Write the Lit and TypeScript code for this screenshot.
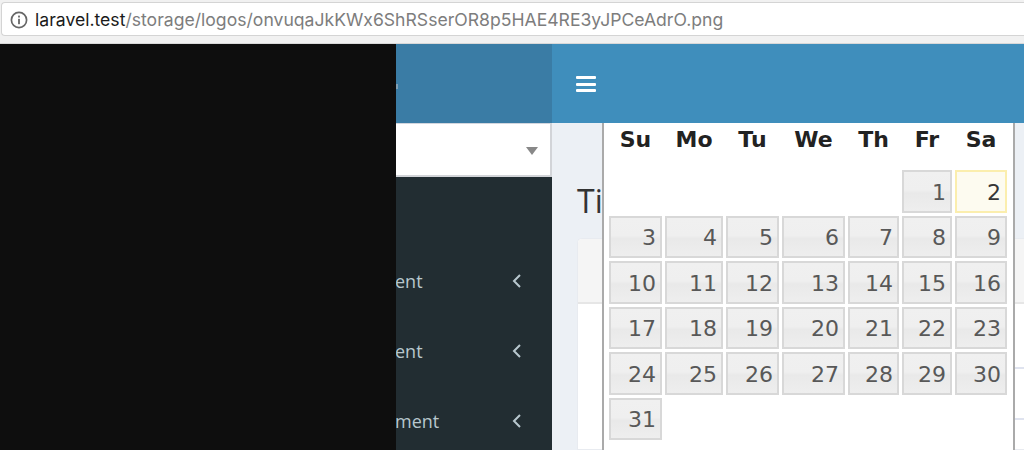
import { LitElement, html, css, svg } from "lit";
import { customElement } from "lit/decorators.js";

const HEAD = ["Su", "Mo", "Tu", "We", "Th", "Fr", "Sa"];
const WEEKS: (number | null)[][] = [
  [null, null, null, null, null, 1, 2],
  [3, 4, 5, 6, 7, 8, 9],
  [10, 11, 12, 13, 14, 15, 16],
  [17, 18, 19, 20, 21, 22, 23],
  [24, 25, 26, 27, 28, 29, 30],
  [31, null, null, null, null, null, null],
];
const MENU = ["ent", "ent", "ment"];

@customElement("app-root")
export class AppRoot extends LitElement {
  static styles = css`
    :host { display: block; width: 1024px; height: 450px; overflow: hidden; position: relative; background: #ecf0f5; font-family: "Open Sans", "Noto Sans", sans-serif; }
    .chrome { height: 44px; box-sizing: border-box; background: #f1f1f1; border-bottom: 1px solid #d8d8d8; padding: 2px 0 7px 1px; }
    .url { height: 34px; box-sizing: border-box; background: #fff; border: 1px solid #d4d4d4; border-right: 0; border-radius: 4px 0 0 4px; display: flex; align-items: center; padding: 1px 0 0 8px; gap: 7px; font: 17.6px "Inter", "Liberation Sans", sans-serif; color: #7d7d7d; white-space: nowrap; }
    .url b { font-weight: 400; color: #1a1a1a; }
    .url svg { flex: none; }
    .page { display: flex; height: 406px; }
    .black { width: 396px; flex: none; background: #0e0e0e; }
    .side { width: 156px; flex: none; display: flex; flex-direction: column; background: #222d32; overflow: hidden; }
    .side-top { height: 79px; flex: none; box-sizing: border-box; background: #3a7ca5; padding-top: 40px; }
    .side-top i { display: block; width: 2px; height: 5px; background: #7f9fb5; }
    .select { height: 54px; flex: none; box-sizing: border-box; background: #fff; border-bottom: 2px solid #d2d4d8; border-top: 1px solid #d2d6de; border-right: 2px solid #d2d4d8; display: flex; align-items: center; justify-content: flex-end; padding: 2px 12px 0 0; }
    .caret { width: 0; height: 0; border-left: 6px solid transparent; border-right: 6px solid transparent; border-top: 8px solid #888; }
    .menu { flex: 1; padding-top: 94px; display: flex; flex-direction: column; gap: 50px; color: #b8c7ce; font-size: 18px; line-height: 20px; }
    .menu-item { display: flex; justify-content: space-between; align-items: center; padding-right: 30px; margin-left: -1px; }
    .menu-item svg { flex: none; }
    .main { flex: 1; min-width: 0; display: flex; flex-direction: column; }
    .nav { height: 79px; flex: none; box-sizing: border-box; background: #3f8ebc; padding: 32px 0 0 24px; }
    .burger { width: 20px; height: 16px; display: flex; flex-direction: column; justify-content: space-between; }
    .burger i { display: block; height: 3px; background: #fff; border-radius: 1px; }
    .content { flex: 1; padding: 0 0 0 25px; display: flex; flex-direction: column; }
    h1 { margin: 0; padding-top: 58px; font-size: 32px; font-weight: 400; line-height: 40px; color: #333; height: 57px; box-sizing: content-box; }
    .card { flex: 1; background: #fff; border: 1px solid #e8ebf0; border-right: 0; border-radius: 5px 0 0 0; overflow: hidden; }
    .card-head { height: 63px; background: #f5f5f5; border-bottom: 2px solid #e6e6e6; }
    .line { height: 63px; margin-left: 60px; border-bottom: 2px solid #dfe3ef; }
    .line.short { height: 49px; }
    .cal { position: absolute; left: 602px; top: 123px; width: 413px; height: 340px; box-sizing: border-box; background: #fff; border: 2px solid #aaa; border-top: 0; padding: 0 2px; font-family: "DejaVu Sans", Verdana, sans-serif; }
    table { border-collapse: separate; border-spacing: 3px; width: 404px; table-layout: fixed; margin-top: -1px; }
    col.c1 { width: 53px; } col.c2 { width: 58px; } col.c3 { width: 53px; } col.c4 { width: 63px; } col.c5 { width: 51px; } col.c6 { width: 50px; } col.c7 { width: 52px; }
    th { height: 27px; padding: 1px 0 14px; font-size: 22px; font-weight: 700; color: #222; text-align: center; line-height: 27px; }
    td { height: 42.5px; box-sizing: border-box; padding: 2px 4px 0 0; text-align: right; font-size: 22px; color: #585858; }
    .day { border: 2px solid #d8d8d8; background: linear-gradient(#f0f0f0 0%, #efefef 46%, #e9e9e9 54%, #eeeeee 100%); }
    .today { border: 2px solid #fbeeae; background: #fdfbf0; color: #363636; }
    .empty { background: none; }
  `;

  private icon() {
    return html`<svg width="18" height="18" viewBox="0 0 18 18" fill="none">
      ${svg`<circle cx="9" cy="9" r="7.6" stroke="#666" stroke-width="1.7"/><rect x="8.1" y="7.8" width="1.8" height="5.4" fill="#666"/><rect x="8.1" y="4.6" width="1.8" height="1.9" fill="#666"/>`}
    </svg>`;
  }

  render() {
    return html`
      <div class="chrome">
        <div class="url">${this.icon()}<span><b>laravel.test</b>/storage/logos/onvuqaJkKWx6ShRSserOR8p5HAE4RE3yJPCeAdrO.png</span></div>
      </div>
      <div class="page">
        <div class="black"></div>
        <div class="side">
          <div class="side-top"><i></i></div>
          <div class="select"><span class="caret"></span></div>
          <div class="menu">
            ${MENU.map((t) => html`<div class="menu-item"><span>${t}</span>
              <svg width="10" height="14" viewBox="0 0 10 14" fill="none"><path d="M8 1 L2 7 L8 13" stroke="#b8c7ce" stroke-width="2"/></svg></div>`)}
          </div>
        </div>
        <div class="main">
          <div class="nav"><div class="burger"><i></i><i></i><i></i></div></div>
          <div class="content">
            <h1>Time</h1>
            <div class="card"><div class="card-head"></div><div class="line"></div><div class="line short"></div></div>
          </div>
        </div>
      </div>
      <div class="cal">
        <table>
          <colgroup><col class="c1"/><col class="c2"/><col class="c3"/><col class="c4"/><col class="c5"/><col class="c6"/><col class="c7"/></colgroup>
          <tr class="head">${HEAD.map((h) => html`<th>${h}</th>`)}</tr>
          ${WEEKS.map((w) => html`<tr>${w.map((d) =>
            d === null ? html`<td class="empty"></td>` : html`<td class="day ${d === 2 ? "today" : ""}">${d}</td>`)}</tr>`)}
        </table>
      </div>
    `;
  }
}
